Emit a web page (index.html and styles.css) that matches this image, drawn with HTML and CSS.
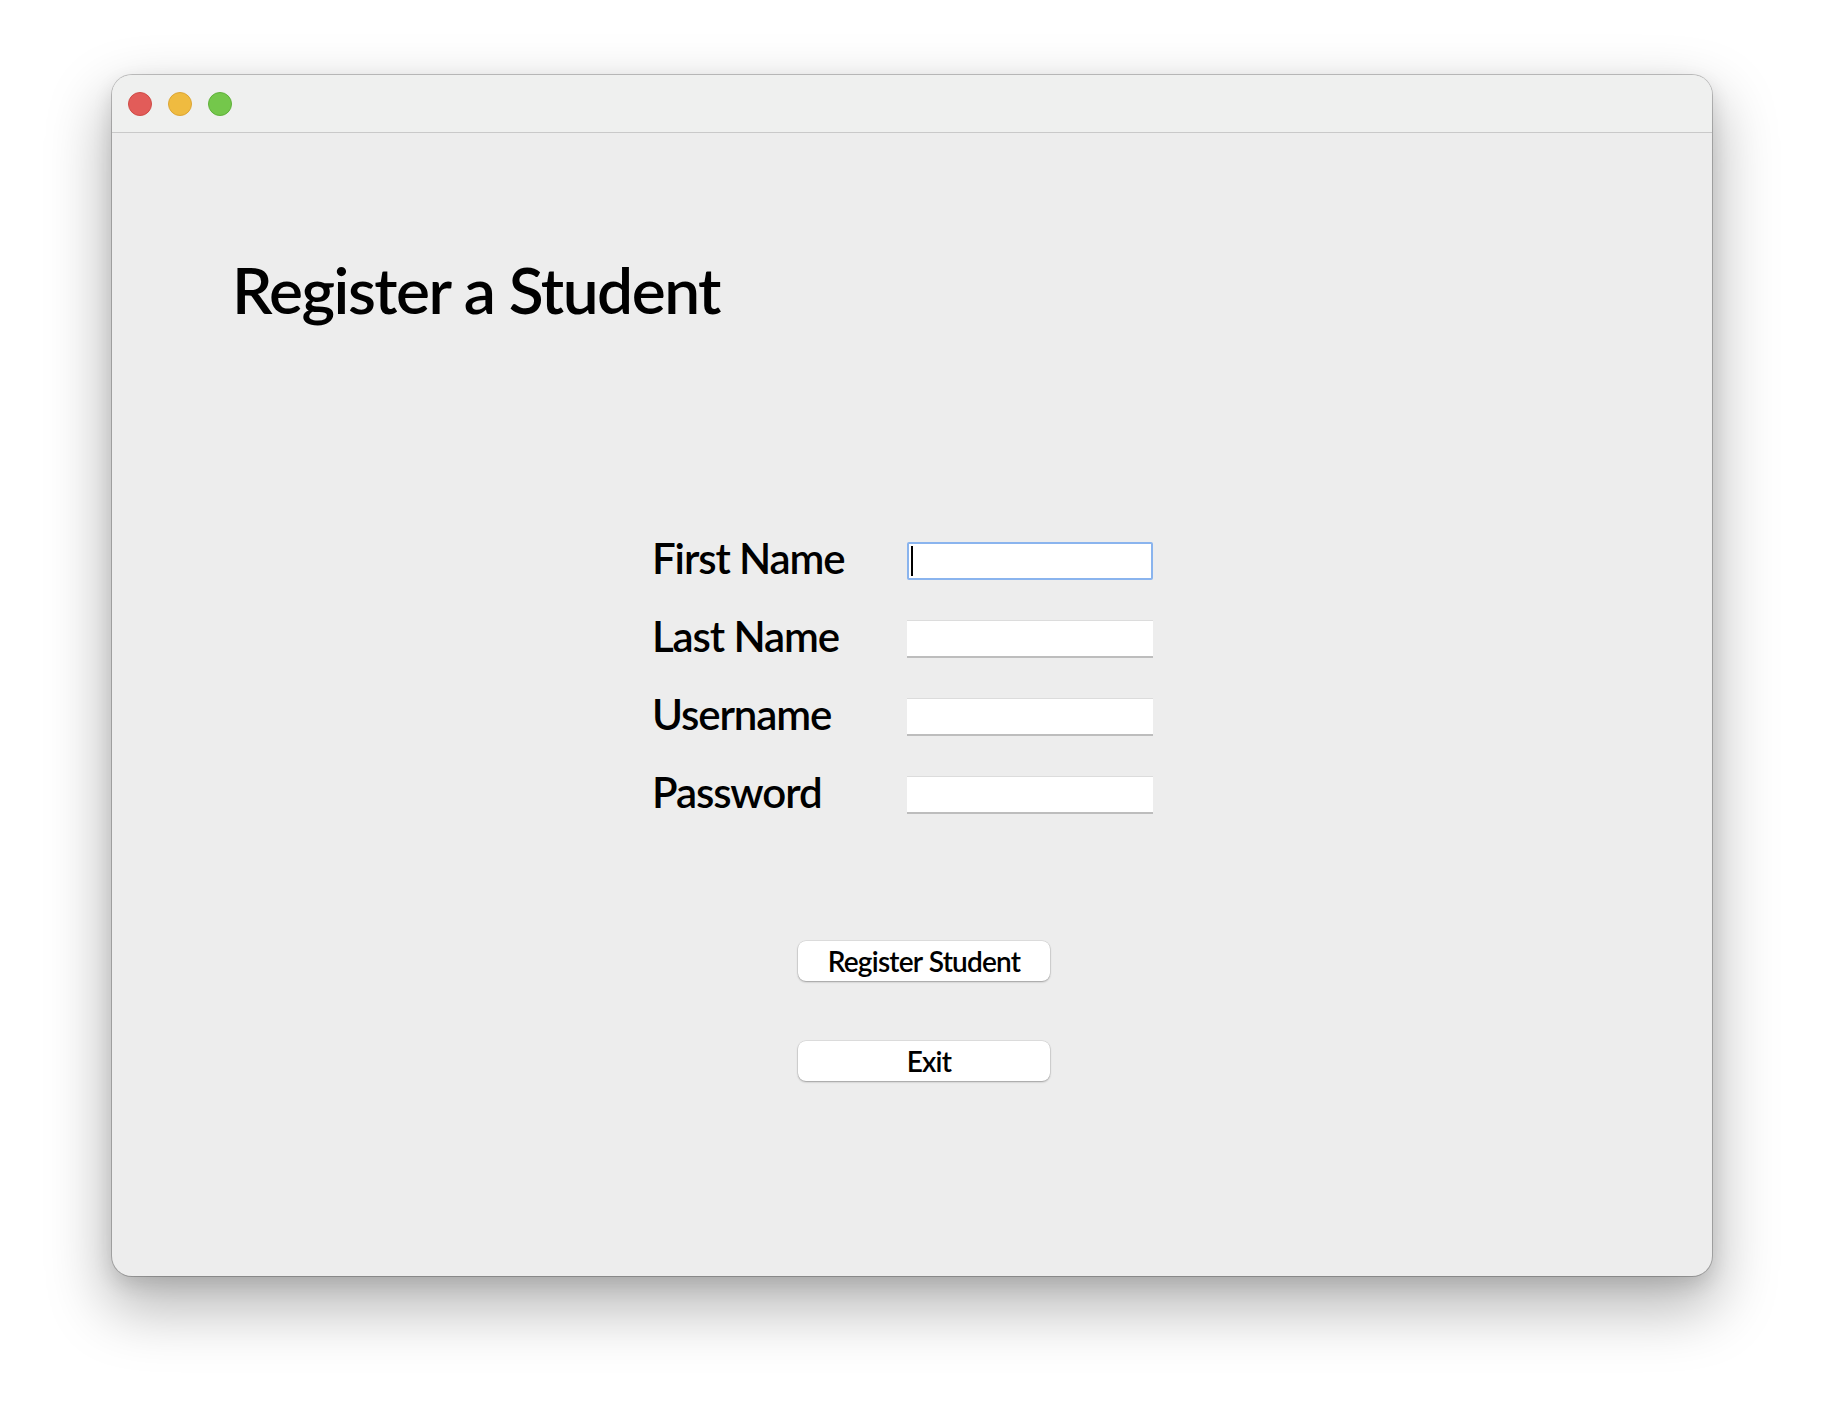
FILE: index.html
```html
<!DOCTYPE html>
<html>
<head>
<meta charset="utf-8">
<title>Register a Student</title>
<link rel="stylesheet" href="styles.css">
</head>
<body>
<div class="window">
  <div class="titlebar">
    <span class="light red"></span>
    <span class="light yellow"></span>
    <span class="light green"></span>
  </div>
  <div class="content">
    <h1 class="heading">Register a Student</h1>
    <div class="form">
      <label class="label">First Name</label>
      <div class="field focused"><span class="caret"></span></div>
      <label class="label">Last Name</label>
      <div class="field"></div>
      <label class="label">Username</label>
      <div class="field"></div>
      <label class="label">Password</label>
      <div class="field"></div>
    </div>
    <div class="actions">
      <button class="btn">Register Student</button>
      <button class="btn btn-exit">Exit</button>
    </div>
  </div>
</div>
</body>
</html>
```

FILE: styles.css
```css
html, body {
  margin: 0;
  padding: 0;
  background: #ffffff;
}
body {
  width: 1824px;
  height: 1424px;
  overflow: hidden;
  font-family: "Lato", "Liberation Sans", sans-serif;
  color: #000;
}
.window {
  margin: 75px 0 0 112px;
  width: 1600px;
  height: 1201px;
  box-sizing: border-box;
  border-radius: 20px;
  background: #ededed;
  overflow: hidden;
  box-shadow: 0 0 0 1px rgba(0,0,0,0.22), 0 28px 60px 6px rgba(0,0,0,0.28), 0 8px 20px rgba(0,0,0,0.12);
  display: flex;
  flex-direction: column;
}
.titlebar {
  height: 57px;
  flex: none;
  background: #eff0ef;
  border-bottom: 1px solid #c9c9c9;
  display: flex;
  align-items: center;
  gap: 16px;
  padding: 0 0 0 16px;
}
.light {
  width: 24px;
  height: 24px;
  border-radius: 50%;
  box-sizing: border-box;
}
.red { background: #e25c59; border: 1px solid #cf4b46; }
.yellow { background: #efbb40; border: 1px solid #dca534; }
.green { background: #74c74b; border: 1px solid #5fb03a; }
.content {
  flex: 1;
  display: flex;
  flex-direction: column;
}
.heading {
  margin: 119px 0 0 120px;
  font-size: 64px;
  line-height: 1.2;
  font-weight: 600;
  letter-spacing: -1.5px;
}
.form {
  margin: 213px 0 0 540px;
  display: grid;
  grid-template-columns: 255px 246px;
  grid-auto-rows: 38px;
  row-gap: 40px;
}
.label {
  font-size: 42px;
  line-height: 38px;
  font-weight: 600;
  letter-spacing: -1.1px;
  white-space: nowrap;
  margin-top: -3px;
}
.field {
  background: #ffffff;
  border-top: 1px solid #dcdcdc;
  border-bottom: 2px solid #bdbdbd;
  box-sizing: border-box;
  position: relative;
}
.field.focused {
  border: 2px solid #8ab4ee;
  border-radius: 2px;
}
.caret {
  position: absolute;
  left: 2px;
  top: 2px;
  width: 2px;
  height: 30px;
  background: #000;
}
.actions {
  margin: 127px 0 0 686px;
  display: flex;
  flex-direction: column;
  gap: 60px;
  align-items: flex-start;
}
.btn {
  width: 252px;
  height: 40px;
  border: none;
  border-radius: 8px;
  background: #ffffff;
  box-shadow: 0 0 0 0.5px rgba(0,0,0,0.12), 0 1px 2px rgba(0,0,0,0.3);
  font-family: "Lato", "Liberation Sans", sans-serif;
  font-size: 28px;
  font-weight: 600;
  letter-spacing: -0.8px;
  word-spacing: 1px;
  color: #000;
  padding: 0;
  line-height: 40px;
}
.btn-exit {
  padding-left: 10px;
}
```
